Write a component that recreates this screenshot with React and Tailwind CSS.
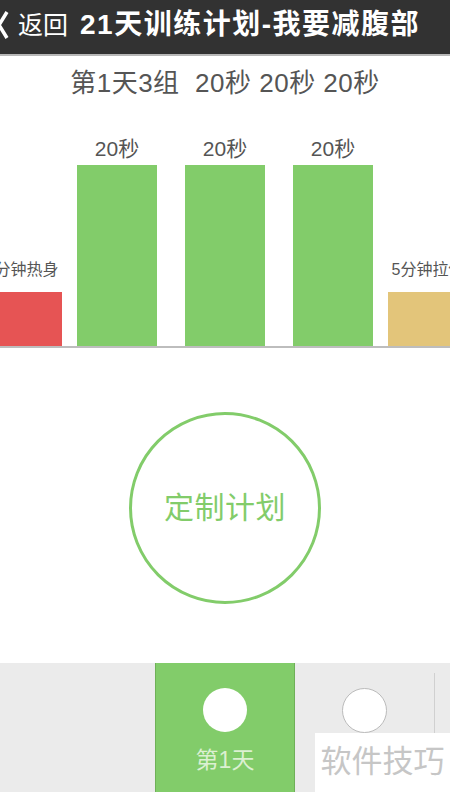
import React from 'react'

const font = { fontFamily: '"Liberation Sans", "Noto Sans CJK SC", sans-serif' }

const Bar = ({ label, height, color, labelClass, gapClass }) => (
  <div className="flex w-[80px] shrink-0 flex-col items-center">
    <div className={`whitespace-nowrap text-[#555] ${labelClass} ${gapClass}`}>{label}</div>
    <div className={`w-full ${height} ${color}`} />
  </div>
)

export default function App() {
  return (
    <div className="flex h-[800px] w-[450px] flex-col overflow-hidden bg-white" style={font}>
      {/* header */}
      <div className="flex h-[56px] shrink-0 items-center border-b-2 border-[#b8b8b8] bg-[#323232] text-white">
        <svg width="12" height="30" viewBox="0 0 12 30" className="-ml-[3px] mt-[-4px]">
          <polyline points="10,2 2,15 10,28" fill="none" stroke="white" strokeWidth="3.5" />
        </svg>
        <span className="ml-[9px] mt-[-4px] text-[25px] leading-none">返回</span>
        <span className="ml-[12px] mt-[-4px] text-[28px] font-bold leading-none tracking-[1.5px]">21天训练计划-我要减腹部</span>
      </div>

      {/* subtitle */}
      <div className="mt-[12px] whitespace-pre text-center text-[26px] leading-[30px] tracking-[0.5px] text-[#555]">
        第1天3组  20秒 20秒 20秒
      </div>

      {/* chart */}
      <div className="mt-[38px] flex items-end overflow-hidden">
        <div className="-ml-[18px] flex items-end gap-[15px]">
          <Bar label="5分钟热身" height="h-[54px]" color="bg-[#e65454]" labelClass="text-[16px] leading-[20px]" gapClass="mb-[12px]" />
          <div className="flex items-end gap-[28px]">
            <Bar label="20秒" height="h-[181px]" color="bg-[#82cc6a]" labelClass="text-[21px] leading-[26px]" gapClass="mb-[3px]" />
            <Bar label="20秒" height="h-[181px]" color="bg-[#82cc6a]" labelClass="text-[21px] leading-[26px]" gapClass="mb-[3px]" />
            <Bar label="20秒" height="h-[181px]" color="bg-[#82cc6a]" labelClass="text-[21px] leading-[26px]" gapClass="mb-[3px]" />
          </div>
          <Bar label="5分钟拉伸" height="h-[54px]" color="bg-[#e3c57a]" labelClass="text-[16px] leading-[20px]" gapClass="mb-[12px]" />
        </div>
      </div>
      <div className="h-[2px] shrink-0 bg-[#bdbdbd]" />

      {/* circle */}
      <div className="flex flex-1 items-center justify-center">
        <div className="mt-[4px] flex h-[192px] w-[192px] items-center justify-center rounded-full border-[3px] border-[#82cc6a]">
          <span className="text-[30px] tracking-[0.5px] text-[#82cc6a]">定制计划</span>
        </div>
      </div>

      {/* day tabs */}
      <div className="relative flex h-[129px] shrink-0 bg-[#ebebeb]">
        <div className="w-[155px]" />
        <div className="flex w-[140px] flex-col items-center border-x border-[#6fb058] bg-[#82cc6a]">
          <div className="mt-[25px] h-[44px] w-[44px] rounded-full bg-white" />
          <div className="mt-[14px] text-[23px] leading-[28px] text-[#dcf0d2]">第1天</div>
        </div>
        <div className="my-[10px] flex w-[140px] flex-col items-center border-r border-[#d0d0d0]">
          <div className="mt-[15px] h-[45px] w-[45px] rounded-full border border-[#bbb] bg-white" />
        </div>
        <div className="absolute bottom-0 right-0 flex h-[59px] w-[135px] items-center justify-center bg-white">
          <span className="text-[31px] text-[#c6c6c6]">软件技巧</span>
        </div>
      </div>
      <div className="h-[8px] shrink-0 bg-white" />
    </div>
  )
}
